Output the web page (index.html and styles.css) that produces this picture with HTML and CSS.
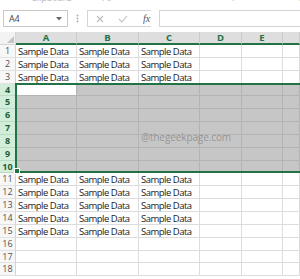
FILE: index.html
```html
<!DOCTYPE html>
<html>
<head>
<meta charset="utf-8">
<link rel="stylesheet" href="styles.css">
</head>
<body>
<div class="ribbon-strip">
  <span class="grp g1">Clipboard</span>
  <span class="grp g2">Fo</span>
  <span class="grp g4">r</span>
  <span class="grp g5">A</span>
</div>
<div class="fbar">
  <div class="namebox">
    <span class="ref">A4</span>
    <svg class="caret" width="6" height="4" viewBox="0 0 6 4"><path d="M0 0 L6 0 L3 3.5 Z" fill="#6a6a6a"/></svg>
  </div>
  <svg class="grip" width="3" height="9" viewBox="0 0 3 9"><circle cx="1.5" cy="1.5" r="0.9" fill="#a8a8a8"/><circle cx="1.5" cy="4.5" r="0.9" fill="#a8a8a8"/><circle cx="1.5" cy="7.5" r="0.9" fill="#a8a8a8"/></svg>
  <div class="fbtns">
    <svg class="ico" width="8" height="8" viewBox="0 0 8 8"><path d="M1 1 L7 7 M7 1 L1 7" stroke="#bdbdbd" stroke-width="1.1" fill="none"/></svg>
    <svg class="ico chk" width="10" height="8" viewBox="0 0 10 8"><path d="M1 4.2 L3.8 7 L9 1" stroke="#bdbdbd" stroke-width="1.1" fill="none"/></svg>
    <span class="fx">fx</span>
  </div>
  <div class="finput"></div>
</div>
<div class="sheet">
  <div class="row hdr">
    <div class="corner"><svg width="7" height="7" viewBox="0 0 7 7"><path d="M7 0 L7 7 L0 7 Z" fill="#c4c4c4"/></svg></div>
    <div class="ch">A</div><div class="ch">B</div><div class="ch">C</div><div class="ch">D</div><div class="ch">E</div><div class="ch"></div>
  </div>
  <div class="row"><div class="rh">1</div><div class="c">Sample Data</div><div class="c">Sample Data</div><div class="c">Sample Data</div><div class="c"></div><div class="c"></div><div class="c"></div></div>
  <div class="row"><div class="rh">2</div><div class="c">Sample Data</div><div class="c">Sample Data</div><div class="c">Sample Data</div><div class="c"></div><div class="c"></div><div class="c"></div></div>
  <div class="row"><div class="rh">3</div><div class="c">Sample Data</div><div class="c">Sample Data</div><div class="c">Sample Data</div><div class="c"></div><div class="c"></div><div class="c"></div></div>
  <div class="row sel"><div class="rh">4</div><div class="c active"></div><div class="c"></div><div class="c"></div><div class="c"></div><div class="c"></div><div class="c"></div></div>
  <div class="row sel"><div class="rh">5</div><div class="c"></div><div class="c"></div><div class="c"></div><div class="c"></div><div class="c"></div><div class="c"></div></div>
  <div class="row sel"><div class="rh">6</div><div class="c"></div><div class="c"></div><div class="c"></div><div class="c"></div><div class="c"></div><div class="c"></div></div>
  <div class="row sel"><div class="rh">7</div><div class="c"></div><div class="c"></div><div class="c"></div><div class="c"></div><div class="c"></div><div class="c"></div></div>
  <div class="row sel"><div class="rh">8</div><div class="c"></div><div class="c"></div><div class="c"></div><div class="c"></div><div class="c"></div><div class="c"></div></div>
  <div class="row sel"><div class="rh">9</div><div class="c"></div><div class="c"></div><div class="c"></div><div class="c"></div><div class="c"></div><div class="c"></div></div>
  <div class="row sel"><div class="rh">10</div><div class="c"></div><div class="c"></div><div class="c"></div><div class="c"></div><div class="c"></div><div class="c"></div></div>
  <div class="row"><div class="rh">11</div><div class="c">Sample Data</div><div class="c">Sample Data</div><div class="c">Sample Data</div><div class="c"></div><div class="c"></div><div class="c"></div></div>
  <div class="row"><div class="rh">12</div><div class="c">Sample Data</div><div class="c">Sample Data</div><div class="c">Sample Data</div><div class="c"></div><div class="c"></div><div class="c"></div></div>
  <div class="row"><div class="rh">13</div><div class="c">Sample Data</div><div class="c">Sample Data</div><div class="c">Sample Data</div><div class="c"></div><div class="c"></div><div class="c"></div></div>
  <div class="row"><div class="rh">14</div><div class="c">Sample Data</div><div class="c">Sample Data</div><div class="c">Sample Data</div><div class="c"></div><div class="c"></div><div class="c"></div></div>
  <div class="row"><div class="rh">15</div><div class="c">Sample Data</div><div class="c">Sample Data</div><div class="c">Sample Data</div><div class="c"></div><div class="c"></div><div class="c"></div></div>
  <div class="row"><div class="rh">16</div><div class="c"></div><div class="c"></div><div class="c"></div><div class="c"></div><div class="c"></div><div class="c"></div></div>
  <div class="row"><div class="rh">17</div><div class="c"></div><div class="c"></div><div class="c"></div><div class="c"></div><div class="c"></div><div class="c"></div></div>
  <div class="row"><div class="rh">18</div><div class="c"></div><div class="c"></div><div class="c"></div><div class="c"></div><div class="c"></div><div class="c"></div></div>
  <div class="selbox"><span class="handle"></span></div>
  <div class="watermark">@thegeekpage.com</div>
</div>
</body>
</html>
```
FILE: styles.css
```css
html, body {
  margin: 0;
  padding: 0;
  background: #ffffff;
  width: 300px;
  height: 279px;
  overflow: hidden;
  font-family: "Open Sans", "Noto Sans", sans-serif;
}

.ribbon-strip {
  height: 3px;
  overflow: hidden;
  display: flex;
}
.grp {
  font-size: 9px;
  line-height: 9px;
  color: #b4b4b4;
  margin-top: -7px;
  white-space: nowrap;
}
.g1 { margin-left: 31px; }
.g2 { margin-left: 30px; }
.g4 { margin-left: 120px; }
.g5 { margin-left: 64px; }

.fbar {
  margin-top: 7px;
  height: 17px;
  display: flex;
  align-items: stretch;
}
.namebox {
  margin-left: 3px;
  width: 65px;
  box-sizing: border-box;
  border: 1px solid #c9c9c9;
  display: flex;
  align-items: center;
  justify-content: space-between;
  padding: 0 5px 0 5px;
}
.ref {
  font-size: 9px;
  color: #444;
  letter-spacing: -0.2px;
}
.caret { display: block; }
.grip {
  align-self: center;
  margin-left: 8px;
}
.fbtns {
  margin-left: 8px;
  width: 64px;
  box-sizing: border-box;
  border: 1px solid #d4d4d4;
  border-right: none;
  display: flex;
  align-items: center;
  padding-left: 8px;
}
.ico { display: block; }
.chk { margin-left: 14px; }
.fx {
  margin-left: 15px;
  font-family: "Liberation Serif", serif;
  font-style: italic;
  font-size: 10px;
  color: #555;
}
.finput {
  margin-left: 8px;
  flex: 1;
  border: 1px solid #d4d4d4;
  border-right: none;
}

.sheet {
  margin-top: 5px;
  display: grid;
  grid-template-columns: 16px 61px 62px 61px 42px 41px 17px;
  grid-template-rows: 13px;
  grid-auto-rows: 12.85px;
  position: relative;
}
.row { display: contents; }

.corner {
  background: #f3f3f3;
  border-right: 1px solid #d6d6d6;
  border-bottom: 1px solid #d6d6d6;
  box-sizing: border-box;
  display: flex;
  align-items: flex-end;
  justify-content: flex-end;
  padding: 0 1px 1px 0;
}
.corner svg { display: block; }
.ch {
  background: #dedede;
  color: #217346;
  font-size: 9.5px;
  font-weight: 700;
  line-height: 11px;
  text-align: center;
  border-right: 1px solid #cbcbcb;
  border-bottom: 2px solid #217346;
  box-sizing: border-box;
}

.rh {
  background: #f7f7f7;
  color: #505050;
  font-size: 9px;
  line-height: 12px;
  text-align: center;
  border-right: 1px solid #d4d4d4;
  border-bottom: 1px solid #e2e2e2;
  box-sizing: border-box;
  overflow: hidden;
}
.c {
  border-right: 1px solid #dcdcdc;
  border-bottom: 1px solid #dcdcdc;
  box-sizing: border-box;
  font-size: 9.5px;
  line-height: 11px;
  color: #1a1a1a;
  padding-left: 2px;
  white-space: nowrap;
  overflow: hidden;
  letter-spacing: -0.5px;
  display: flex;
  align-items: flex-end;
}

.sel .rh {
  background: #d2eedb;
  color: #1b5e36;
  font-weight: 700;
  border-bottom-color: #b9dcc4;
}
.sel .c {
  background: #c6c6c6;
  border-right-color: #b3b3b3;
  border-bottom-color: #b3b3b3;
}
.sel .c.active {
  background: #ffffff;
}

.selbox {
  grid-row: 5 / 12;
  grid-column: 2 / -1;
  position: absolute;
  top: -1px;
  left: -1px;
  right: -3px;
  bottom: 0;
  border: 2px solid #217346;
  pointer-events: none;
}
.handle {
  position: absolute;
  left: -3px;
  bottom: -3px;
  width: 4px;
  height: 4px;
  background: #217346;
  border: 1px solid #ffffff;
}
.watermark {
  position: absolute;
  left: 141px;
  top: 98px;
  font-size: 10px;
  color: rgba(115, 115, 115, 0.6);
  letter-spacing: -0.1px;
  white-space: nowrap;
}
```
